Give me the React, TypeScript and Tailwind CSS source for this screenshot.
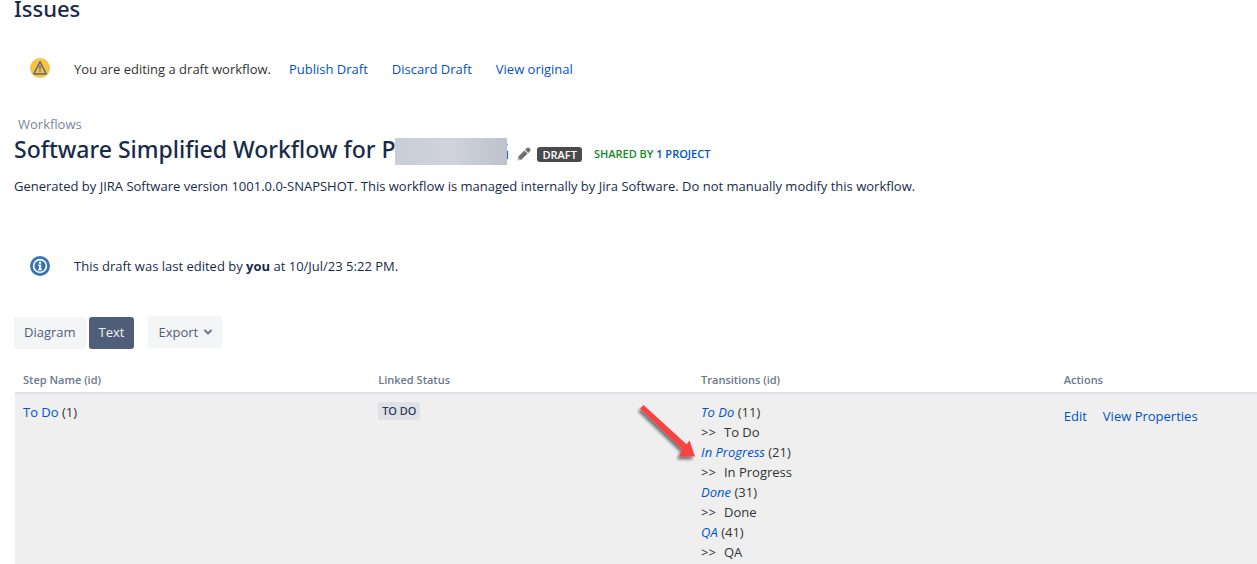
import { ChevronDown } from 'lucide-react';

const draftActions = ['Publish Draft', 'Discard Draft', 'View original'];

const transitions = [
  { name: 'To Do', id: 11 },
  { name: 'In Progress', id: 21 },
  { name: 'Done', id: 31 },
  { name: 'QA', id: 41 },
];

function WarningIcon() {
  return (
    <svg viewBox="0 0 20 20" className="size-5 shrink-0" aria-hidden="true">
      <circle cx="10" cy="10" r="10" fill="#f6c342" />
      <path
        d="M10 3.8 L16.2 15.8 H3.8 Z"
        fill="none"
        stroke="#707070"
        strokeWidth="1.7"
        strokeLinejoin="round"
      />
      <path d="M10 7.5 V11.5 M10 12.4 V14" stroke="#707070" strokeWidth="1.6" />
    </svg>
  );
}

function InfoIcon() {
  return (
    <svg viewBox="0 0 20 20" className="size-5 shrink-0" aria-hidden="true">
      <circle cx="10" cy="10" r="10" fill="#3572b0" />
      <circle cx="10" cy="10" r="6.4" fill="#3572b0" stroke="#fff" strokeWidth="1.6" />
      <circle cx="10" cy="6.7" r="1.2" fill="#fff" />
      <path d="M8.2 8.5 H11.2 V13 H12 V14.2 H8 V13 H8.9 V9.7 H8.2 Z" fill="#fff" />
    </svg>
  );
}

function PencilIcon() {
  return (
    <svg viewBox="0 0 14 14" className="size-3.5" aria-hidden="true">
      <path
        d="M0.6 13.4 L1.4 9.4 L7.4 3.4 L10.6 6.6 L4.6 12.6 Z M8.1 2.7 L10.1 0.8 Q11 0 11.9 0.8 L13.2 2.1 Q14 3 13.2 3.9 L11.3 5.9 Z"
        fill="#707070"
      />
      <path d="M1.5 10.6 L3.4 12.5 L1 13 Z" fill="#c8c8c8" />
    </svg>
  );
}

// Marker pointing at the transition to open
function Arrow() {
  return (
    <svg
      viewBox="0 0 70 70"
      className="pointer-events-none absolute top-0 -left-16 size-[70px] overflow-visible"
      aria-hidden="true"
    >
      <defs>
        <filter id="arrow-shadow" x="-20%" y="-20%" width="150%" height="150%">
          <feDropShadow dx="-2" dy="3" stdDeviation="1.6" floodColor="#000" floodOpacity="0.5" />
        </filter>
      </defs>
      <path
        d="M6.5 3 L49.5 42.2 L52.6 38.6 L58 54.5 L42 54.5 L45.2 47 L3 6.6 Z"
        fill="#fb4242"
        filter="url(#arrow-shadow)"
      />
    </svg>
  );
}

function TextLink({ children, className = '' }: { children: string; className?: string }) {
  return (
    <a href="#" className={`text-[#0052cc] hover:underline ${className}`}>
      {children}
    </a>
  );
}

function WorkflowTable() {
  return (
    <table className="w-full table-fixed border-collapse text-left">
      <colgroup>
        <col className="w-[28.6%]" />
        <col className="w-[26%]" />
        <col className="w-[29.2%]" />
        <col />
      </colgroup>
      <thead>
        <tr className="border-b-2 border-[#dfe1e6] text-[11px] leading-4 text-[#6b778c]">
          <th className="px-2 pb-1 font-semibold">Step Name (id)</th>
          <th className="px-2 pb-1 font-semibold">Linked Status</th>
          <th className="px-2 pb-1 font-semibold">Transitions (id)</th>
          <th className="px-2 pb-1 font-semibold">Actions</th>
        </tr>
      </thead>
      <tbody>
        <tr className="bg-[#efefef] align-top text-[#333]">
          <td className="px-2 py-2">
            <TextLink>To Do</TextLink> (1)
          </td>
          <td className="px-2 py-2">
            <span className="block w-fit rounded-[3px] bg-[#dfe1e6] px-1 font-['Noto_Sans',sans-serif] text-[11px] leading-[18px] font-medium text-[#253858]">
              TO DO
            </span>
          </td>
          <td className="px-2 py-2">
            <div className="relative">
              <Arrow />
              {transitions.map((t) => (
                <div key={t.id}>
                  <TextLink className="italic">{t.name}</TextLink> ({t.id})
                  <div className="flex gap-2">
                    <span>&gt;&gt;</span>
                    <span>{t.name}</span>
                  </div>
                </div>
              ))}
            </div>
          </td>
          <td className="px-2 py-3">
            <div className="flex gap-4">
              <TextLink>Edit</TextLink>
              <TextLink>View Properties</TextLink>
            </div>
          </td>
        </tr>
      </tbody>
    </table>
  );
}

export default function App() {
  return (
    <div className="h-screen overflow-hidden bg-white pl-3.5 font-['Open_Sans','Noto_Sans',sans-serif] text-[13px] leading-5 text-[#172b4d]">
      <h1 className="-mt-2 font-['Noto_Sans',sans-serif] text-[22px] leading-8 font-medium">Issues</h1>

      <div className="mt-[33px] flex items-center gap-6 pl-4 text-[#333]">
        <WarningIcon />
        <div className="flex gap-[18px] pt-0.5">
          <span>You are editing a draft workflow.</span>
          <div className="flex gap-6">
            {draftActions.map((action) => (
              <TextLink key={action}>{action}</TextLink>
            ))}
          </div>
        </div>
      </div>

      <nav className="mt-[35px] pl-1">
        <a href="#" className="text-[#7a869a]">
          Workflows
        </a>
      </nav>
      <div className="-mt-px flex items-center">
        <h2 className="flex items-center font-['Noto_Sans',sans-serif] text-[23px] leading-8 font-medium">
          Software Simplified Workflow for P
          <span className="relative mt-1 flex h-[27px] w-[114px] items-center justify-end">
            <span>G</span>
            <span className="absolute inset-y-0 right-0.5 left-0 bg-linear-to-r from-[#c9cdd6] via-[#d0d3dc] to-[#bdc2cb]" />
          </span>
        </h2>
        <button type="button" aria-label="Edit name" className="mt-2.5 ml-2">
          <PencilIcon />
        </button>
        <span className="mt-2.5 ml-1.5 rounded-[3px] bg-[#4a4a4a] px-[5px] text-[11px] leading-[15px] font-semibold text-white">
          DRAFT
        </span>
        <span className="mt-2.5 ml-3 text-[11px] leading-4 font-semibold text-[#14892c]">
          SHARED BY <TextLink>1 PROJECT</TextLink>
        </span>
      </div>
      <p className="mt-[11px]">
        Generated by JIRA Software version 1001.0.0-SNAPSHOT. This workflow is managed internally by
        Jira Software. Do not manually modify this workflow.
      </p>

      <div className="mt-15 flex items-center gap-6 pl-4">
        <InfoIcon />
        <p>
          This draft was last edited by <strong>you</strong> at 10/Jul/23 5:22 PM.
        </p>
      </div>

      <div className="mt-10 flex gap-3.5 text-[#505f79]">
        <div className="mt-px flex gap-[3px]">
          <button type="button" className="h-8 rounded-[3px] bg-[#f4f5f7] px-2.5 pb-0.5">
            Diagram
          </button>
          <button type="button" className="h-8 rounded-[3px] bg-[#505f79] px-2.5 pb-0.5 text-[#f4f5f7]">
            Text
          </button>
        </div>
        <button
          type="button"
          className="flex h-8 items-center gap-1 rounded-[3px] bg-[#f4f5f7] pr-2 pl-2.5"
        >
          Export
          <ChevronDown className="size-3 text-[#6b778c]" strokeWidth={4} />
        </button>
      </div>

      <div className="mt-[23px] pl-px">
        <WorkflowTable />
      </div>
    </div>
  );
}
